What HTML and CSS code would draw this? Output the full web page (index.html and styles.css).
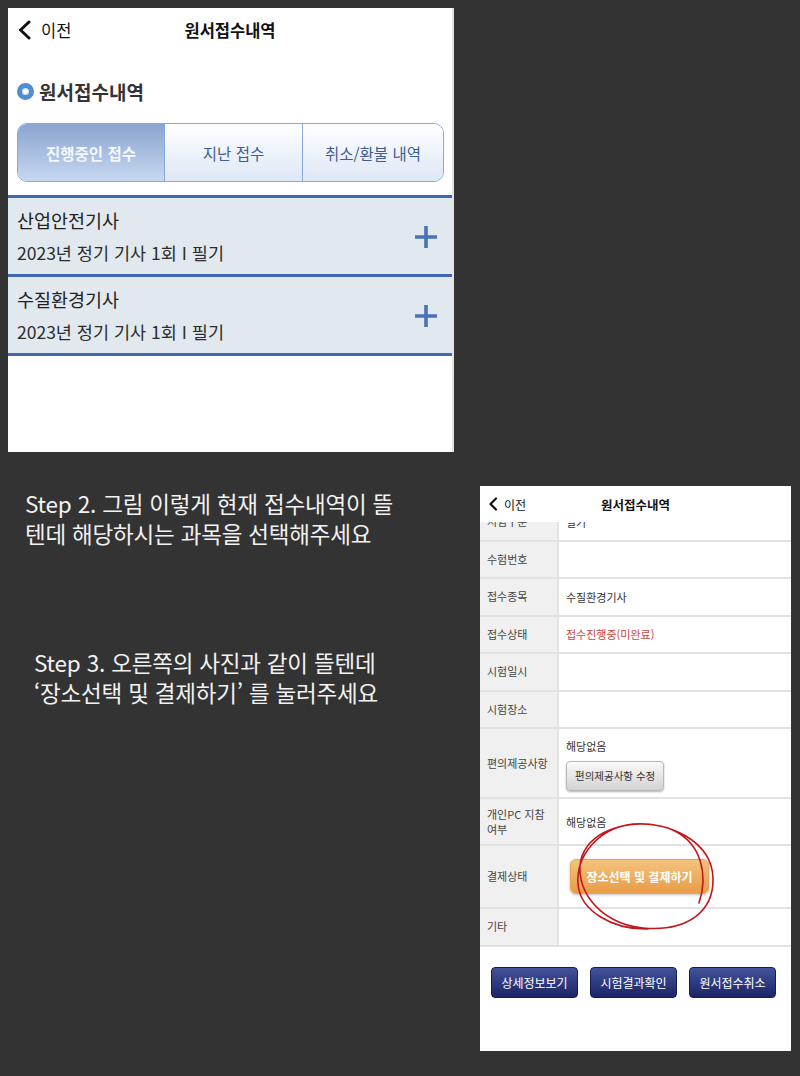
FILE: index.html
```html
<!DOCTYPE html>
<html lang="ko">
<head>
    <meta charset="UTF-8">
    <meta name="viewport" content="width=device-width, initial-scale=1.0">
    <title>원서접수내역 안내</title>
    <link rel="stylesheet" href="styles.css">
</head>
<body>
    <section class="shot shot-list">
        <div class="app-header">
            <span class="back">
                <svg width="15" height="20" viewBox="0 0 15 20"><path d="M12 2 L3.5 10 L12 18" fill="none" stroke="#111" stroke-width="3" stroke-linecap="round" stroke-linejoin="round"/></svg>
                이전
            </span>
            <span class="app-title">원서접수내역</span>
        </div>

        <h2 class="section-title"><span class="bullet"></span>원서접수내역</h2>

        <div class="tabs">
            <div class="tab active">진행중인 접수</div>
            <div class="tab">지난 접수</div>
            <div class="tab">취소/환불 내역</div>
        </div>

        <ul class="exam-list">
            <li class="exam-item">
                <div>
                    <div class="exam-name">산업안전기사</div>
                    <div class="exam-round">2023년 정기 기사 1회 I 필기</div>
                </div>
                <svg class="plus" width="22" height="22" viewBox="0 0 22 22"><path d="M11 0 V22 M0 11 H22" stroke="#4a72b6" stroke-width="3.6"/></svg>
            </li>
            <li class="exam-item">
                <div>
                    <div class="exam-name">수질환경기사</div>
                    <div class="exam-round">2023년 정기 기사 1회 I 필기</div>
                </div>
                <svg class="plus" width="22" height="22" viewBox="0 0 22 22"><path d="M11 0 V22 M0 11 H22" stroke="#4a72b6" stroke-width="3.6"/></svg>
            </li>
        </ul>
    </section>

    <div class="lower">
        <div class="steps">
            <p class="step step2">Step 2. 그림 이렇게 현재 접수내역이 뜰<br>텐데 해당하시는 과목을 선택해주세요</p>
            <p class="step step3">Step 3. 오른쪽의 사진과 같이 뜰텐데<br>‘장소선택 및 결제하기’ 를 눌러주세요</p>
        </div>

        <section class="shot shot-detail">
            <div class="detail-header">
                <span class="back small">
                    <svg width="10" height="14" viewBox="0 0 10 14"><path d="M8 1.5 L2.5 7 L8 12.5" fill="none" stroke="#111" stroke-width="2.2" stroke-linecap="round" stroke-linejoin="round"/></svg>
                    이전
                </span>
                <span class="detail-title">원서접수내역</span>
            </div>

            <div class="detail-scroll">
                <table class="info-table">
                    <tr class="row"><th>시험구분</th><td>필기</td></tr>
                    <tr class="row"><th>수험번호</th><td></td></tr>
                    <tr class="row"><th>접수종목</th><td>수질환경기사</td></tr>
                    <tr class="row"><th>접수상태</th><td class="status">접수진행중(미완료)</td></tr>
                    <tr class="row"><th>시험일시</th><td></td></tr>
                    <tr class="row"><th>시험장소</th><td></td></tr>
                    <tr class="row-tall">
                        <th>편의제공사항</th>
                        <td>
                            <div class="plain">해당없음</div>
                            <button class="btn-grey">편의제공사항 수정</button>
                        </td>
                    </tr>
                    <tr class="row-pc"><th>개인PC 지참<br>여부</th><td>해당없음</td></tr>
                    <tr class="row-pay"><th>결제상태</th><td><button class="btn-orange">장소선택 및 결제하기</button></td></tr>
                    <tr class="row"><th>기타</th><td></td></tr>
                </table>

                <div class="actions">
                    <button class="btn-navy">상세정보보기</button>
                    <button class="btn-navy">시험결과확인</button>
                    <button class="btn-navy">원서접수취소</button>
                </div>
            </div>

            <svg class="scribble" width="156" height="124" viewBox="0 0 156 124">
                <path d="M131 87 C140 60 135 25 100 12 C65 2 25 12 14 40 C4 70 30 108 75 112 C120 116 146 95 145 62 C144 25 100 5 65 8 C30 12 8 40 10 68 C12 95 45 114 80 113"
                      fill="none" stroke="#c3161c" stroke-width="1.6" stroke-linecap="round"/>
            </svg>
        </section>
    </div>
</body>
</html>
```

FILE: styles.css
```css
body {
    margin: 0;
    padding: 8px 9px 0 8px;
    background-color: #333333;
    font-family: "Noto Sans CJK KR", "Noto Sans", sans-serif;
    height: 1076px;
    box-sizing: border-box;
    overflow: hidden;
}

.shot {
    background-color: #fff;
    box-sizing: border-box;
}

/* first screenshot */
.shot-list {
    width: 446px;
    height: 444px;
    border-right: 2px solid #e4e4e4;
}
.app-header {
    position: relative;
    height: 44px;
    display: flex;
    align-items: center;
    justify-content: center;
}
.back {
    position: absolute;
    left: 9px;
    top: 0;
    height: 100%;
    display: flex;
    align-items: center;
    gap: 9px;
    font-size: 16.5px;
    color: #111;
}
.app-title {
    font-size: 16.5px;
    font-weight: bold;
    color: #111;
}
.section-title {
    margin: 25px 0 0 9px;
    height: 28px;
    display: flex;
    align-items: center;
    gap: 5px;
    font-size: 19px;
    color: #333;
}
.bullet {
    width: 17px;
    height: 17px;
    border-radius: 50%;
    box-sizing: border-box;
    border: 5px solid #4f8fd0;
    box-shadow: inset 0 0 0 1px #cfe2f5;
    background: radial-gradient(circle, #fff 40%, #bcd9f3 100%);
}
.tabs {
    display: flex;
    margin: 18px 8px 0 9px;
    height: 59px;
    border: 1.5px solid #88a9dc;
    border-radius: 10px;
    overflow: hidden;
    box-sizing: border-box;
}
.tab {
    display: flex;
    align-items: center;
    justify-content: center;
    font-size: 15.5px;
    color: #3d5e93;
    background: linear-gradient(#ffffff, #dde7f6);
    border-left: 1.5px solid #88a9dc;
}
.tab:nth-child(1) { width: 146px; border-left: none; }
.tab:nth-child(2) { width: 137px; }
.tab:nth-child(3) { flex: 1; }
.tab.active {
    background: linear-gradient(#8ba4cf, #c6d8f0);
    color: #f4f7fc;
    font-weight: bold;
}
.exam-list {
    list-style: none;
    margin: 13px 0 0;
    padding: 0;
    border-bottom: 3px solid #4168b0;
}
.exam-item {
    display: flex;
    align-items: center;
    justify-content: space-between;
    height: 76px;
    padding: 0 15px 0 9px;
    border-top: 3px solid #4168b0;
    background-color: #e1e9ef;
}
.exam-name {
    font-size: 18.5px;
    line-height: 26px;
    color: #222;
}
.exam-round {
    margin-top: 7px;
    font-size: 17.5px;
    line-height: 26px;
    color: #2b2b2b;
}
.plus {
    margin-top: 2px;
}

/* lower part */
.lower {
    display: flex;
    margin-top: 34px;
}
.steps {
    flex: 1;
    padding-left: 17px;
}
.step {
    margin: 0;
    font-size: 22.5px;
    line-height: 30px;
    color: #f2f2f2;
    letter-spacing: -0.2px;
}
.step2 {
    margin-top: 2px;
}
.step3 {
    margin-top: 99px;
    padding-left: 9px;
}

/* second screenshot */
.shot-detail {
    position: relative;
    width: 311px;
    height: 565px;
    display: flex;
    flex-direction: column;
}
.detail-header {
    position: relative;
    height: 36px;
    display: flex;
    align-items: center;
    justify-content: center;
}
.back.small {
    left: 8px;
    gap: 6px;
    font-size: 12px;
}
.detail-title {
    font-size: 12.5px;
    font-weight: bold;
    color: #111;
}
.detail-scroll {
    flex: 1;
    overflow: hidden;
}
.info-table {
    width: 100%;
    margin-top: -18px;
    border-collapse: collapse;
    font-size: 11px;
    color: #333;
}
.info-table th,
.info-table td {
    border-bottom: 2px solid #e2e2e2;
    text-align: left;
    vertical-align: middle;
    font-weight: normal;
}
.info-table th {
    width: 70px;
    padding: 0 0 0 7px;
    background-color: #f0f0f0;
    border-right: 2px solid #e2e2e2;
    color: #444;
    line-height: 15px;
}
.info-table td {
    padding: 0 0 0 7px;
}
.row th, .row td { height: 35.5px; }
.row-tall th, .row-tall td { height: 68px; }
.row-pc th, .row-pc td { height: 45px; }
.row-pay th, .row-pay td { height: 61px; }
.status {
    color: #c8443a;
}
.plain {
    line-height: 16px;
    margin-top: 2px;
}
.btn-grey {
    display: block;
    margin-top: 7px;
    height: 30px;
    padding: 0 8px;
    font-family: inherit;
    font-size: 10.5px;
    color: #333;
    background: linear-gradient(#fafafa, #d2d2d2);
    border: 1px solid #b9b9b9;
    border-radius: 4px;
    box-shadow: 0 1px 2px rgba(0, 0, 0, 0.3);
}
.btn-orange {
    margin-left: 4px;
    width: 139px;
    height: 35px;
    font-family: inherit;
    font-size: 12px;
    font-weight: bold;
    color: #fff;
    background: linear-gradient(#f4c37e, #e89c45);
    border: 1px solid #e5a55a;
    border-radius: 6px;
    box-shadow: 0 1px 3px rgba(0, 0, 0, 0.25);
}
.actions {
    display: flex;
    gap: 12px;
    margin: 20px 0 0 11px;
}
.btn-navy {
    width: 87px;
    height: 31px;
    padding: 0;
    font-family: inherit;
    font-size: 12px;
    color: #fff;
    background: linear-gradient(#42539b, #1b2465);
    border: 1px solid #151c55;
    border-radius: 4px;
}
.scribble {
    position: absolute;
    left: 88px;
    top: 330px;
}
```
